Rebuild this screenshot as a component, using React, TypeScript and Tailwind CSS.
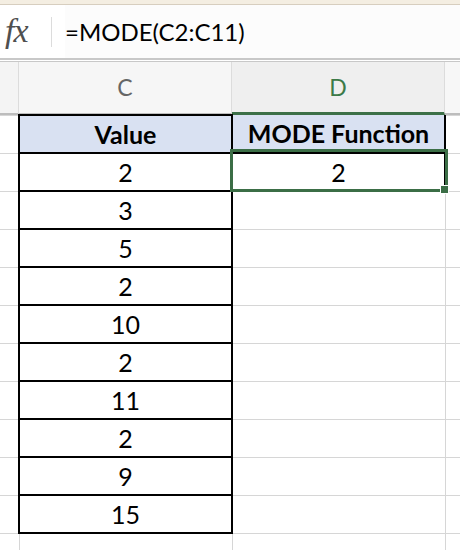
import React from "react";

const values = ["2", "3", "5", "2", "10", "2", "11", "2", "9", "15", ""];

const font = { fontFamily: "Lato, 'Open Sans', sans-serif" };

export default function App() {
  return (
    <div className="w-[460px] h-[550px] overflow-hidden bg-white" style={font}>
      {/* window chrome strip */}
      <div className="h-[5px] bg-[#f4eee2] border-b border-[#d7cebf]" />

      {/* formula bar */}
      <div className="h-[53px] flex items-center bg-white">
        <div className="w-[51px] flex items-center justify-start pl-[5px] pb-[2px]">
          <span
            className="text-[34px] italic text-[#4f4f4f] leading-none tracking-[-1px]"
            style={{ fontFamily: "'Liberation Serif', serif" }}
          >
            fx
          </span>
        </div>
        <div className="w-px h-[30px] bg-[#dcdcdc]" />
        <div className="flex-1 h-full flex items-center ml-[13px] bg-[#fcfcfc]">
          <span className="text-[24px] text-black">=MODE(C2:C11)</span>
        </div>
      </div>

      {/* splitter between formula bar and sheet */}
      <div className="h-[4px] border-t-2 border-b border-[#c8c8c8] bg-white" />

      {/* column headers */}
      <div className="grid grid-cols-[19px_213px_213px_1fr] h-[53px] bg-[#f2f2f2]">
        <div className="border-r border-[#dcdcdc] border-b-2 border-b-[#bdbdbd] bg-[#f4f4f4]" />
        <div className="flex items-center justify-center border-r border-[#dcdcdc] border-b-2 border-b-[#bdbdbd] bg-[#f6f6f6] text-[23px] text-[#666]">
          C
        </div>
        <div className="flex items-center justify-center border-r border-[#dcdcdc] border-b-[3px] border-b-[#3c7048] bg-[#efefef] text-[23px] text-[#3c7a48]">
          D
        </div>
        <div className="border-b-2 border-b-[#bdbdbd] bg-[#f7f7f7]" />
      </div>

      {/* cells */}
      <div className="relative">
        <table className="border-collapse table-fixed w-[460px] -mt-px">
          <colgroup>
            <col className="w-[19px]" />
            <col className="w-[213px]" />
            <col className="w-[213px]" />
            <col />
          </colgroup>
          <tbody>
            <tr className="h-[38px]">
              <td className="border border-[#d6d6d6] border-l-0" />
              <td className="border-2 border-black bg-[#d9e1f2] text-center text-[25px] leading-none font-bold text-black p-0">
                Value
              </td>
              <td className="border-2 border-black border-t-0 bg-[#d9e1f2] text-center text-[25px] leading-none font-bold text-black p-0">
                MODE Function
              </td>
              <td className="border border-[#d6d6d6] border-r-0" />
            </tr>
            {values.map((v, i) => {
              const inTable = v !== "";
              return (
                <tr key={i} className="h-[38px]">
                  <td className="border border-[#d6d6d6] border-l-0" />
                  <td
                    className={
                      inTable
                        ? "border-2 border-black text-center text-[25px] leading-none text-black p-0"
                        : "border border-[#d6d6d6] p-0"
                    }
                  >
                    {v}
                  </td>
                  <td
                    className={
                      i === 0
                        ? "border-2 border-black text-center text-[25px] leading-none text-black p-0"
                        : "border border-[#d6d6d6] p-0"
                    }
                  >
                    {i === 0 ? "2" : ""}
                  </td>
                  <td className="border border-[#d6d6d6] border-r-0" />
                </tr>
              );
            })}
          </tbody>
        </table>

        {/* active cell selection on D2 */}
        <div className="absolute left-[230px] top-[35px] w-[218px] h-[43px] border-[3px] border-[#3b6e46] pointer-events-none" />
        <div className="absolute left-[440px] top-[71px] w-[9px] h-[9px] bg-[#3b6e46] border border-white pointer-events-none" />
      </div>
    </div>
  );
}
